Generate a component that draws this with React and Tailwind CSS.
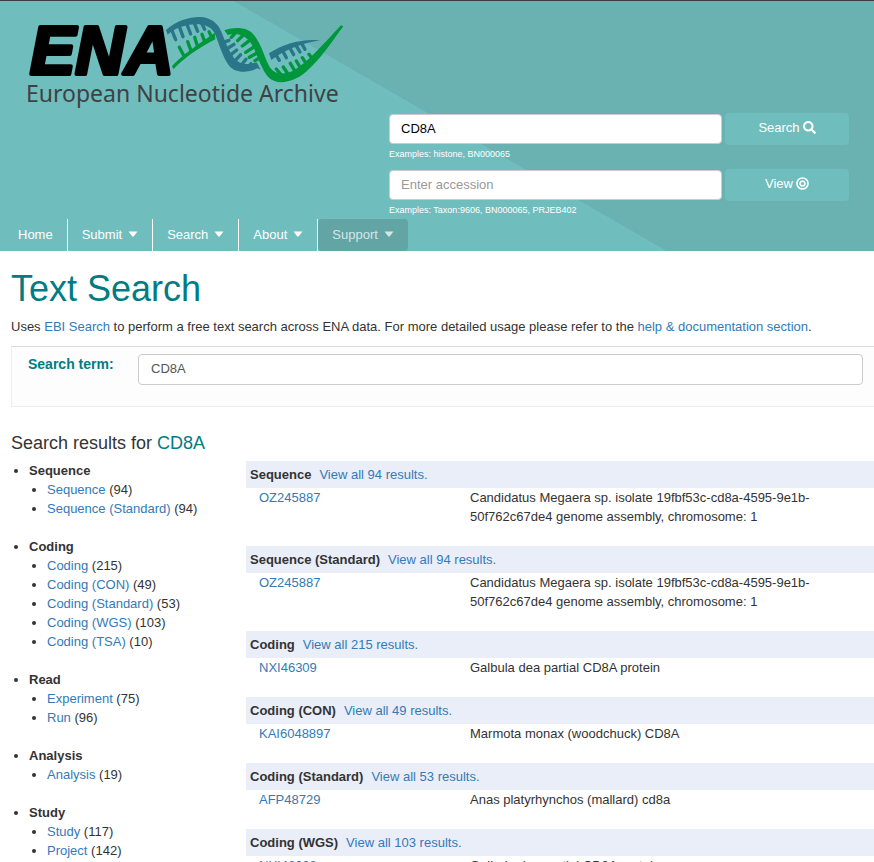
import React, { useState } from 'react';
import { FaSearch, FaBullseye } from 'react-icons/fa';

const navItems = [
  { label: 'Submit' },
  { label: 'Search' },
  { label: 'About' },
  { label: 'Support', active: true },
];

const groups = [
  {
    title: 'Sequence',
    items: [['Sequence', 94], ['Sequence (Standard)', 94]],
  },
  {
    title: 'Coding',
    items: [
      ['Coding', 215],
      ['Coding (CON)', 49],
      ['Coding (Standard)', 53],
      ['Coding (WGS)', 103],
      ['Coding (TSA)', 10],
    ],
  },
  { title: 'Read', items: [['Experiment', 75], ['Run', 96]] },
  { title: 'Analysis', items: [['Analysis', 19]] },
  { title: 'Study', items: [['Study', 117], ['Project', 142]] },
];

const megaera = 'Candidatus Megaera sp. isolate 19fbf53c-cd8a-4595-9e1b-50f762c67de4 genome assembly, chromosome: 1';

const results = [
  { title: 'Sequence', count: 94, id: 'OZ245887', text: megaera },
  { title: 'Sequence (Standard)', count: 94, id: 'OZ245887', text: megaera },
  { title: 'Coding', count: 215, id: 'NXI46309', text: 'Galbula dea partial CD8A protein' },
  { title: 'Coding (CON)', count: 49, id: 'KAI6048897', text: 'Marmota monax (woodchuck) CD8A' },
  { title: 'Coding (Standard)', count: 53, id: 'AFP48729', text: 'Anas platyrhynchos (mallard) cd8a' },
  { title: 'Coding (WGS)', count: 103, id: 'NXI46309', text: 'Galbula dea partial CD8A protein' },
];

function Logo() {
  return (
    <svg viewBox="26 14 324 94" className="block w-[324px] h-[94px] overflow-visible" role="img" aria-label="ENA European Nucleotide Archive">
      <text
        x="30"
        y="74"
        fontSize="68"
        fontWeight="700"
        fontStyle="italic"
        fontFamily="'Liberation Sans', Arial, sans-serif"
        stroke="#000"
        strokeWidth="4"
        strokeLinejoin="round"
      >
        ENA
      </text>
      <text x="26" y="102" fontSize="23" fill="#3e4243" fontFamily="'Noto Sans', sans-serif">
        European Nucleotide Archive
      </text>
      <g transform="translate(160 0) scale(0.3333)" strokeWidth="10" strokeLinecap="round" fill="none">
        <path
          fill="#2a7588"
          d="M18 90C50 62 85 51 120 51C152 52 172 68 184 95C196 125 206 152 222 174C240 196 268 195 290 187L302 209L292 205C262 220 224 220 206 195C188 170 178 133 166 104C155 80 135 73 108 73C75 74 45 84 23 104Z"
        />
        <path
          stroke="#2a7588"
          d="M36 92L47 119M59 82L69 110M82 76L92 102M104 72L113 94M126 72L134 88M190 127L207 121M200 147L222 133M210 166L230 150M222 186L242 164M242 198L258 178M265 202L273 191"
        />
        <path fill="#00973c" d="M36 198C68 162 118 132 164 98L166 118C115 144 75 172 40 208Z" />
        <path stroke="#00973c" d="M72 168L58 142M93 152L83 125M113 140L104 112M135 127L126 103M155 112L147 95" />
        <path
          fill="#00973c"
          d="M193 91C225 80 262 81 281 104C306 134 313 175 331 204C346 224 372 224 396 214C442 190 492 130 543 76L550 79C520 120 482 177 440 214C400 250 348 257 324 230C300 202 291 157 271 127C252 101 224 99 203 105Z"
        />
        <path
          stroke="#00973c"
          d="M228 97L214 112M250 105L233 122M268 122L247 138M280 142L257 157M290 160L268 172M299 174L285 182M364 225L349 207M384 222L370 201M404 212L391 190M421 203L409 183M438 190L427 173M457 176L447 163"
        />
        <path fill="#2a7588" d="M327 160C370 130 430 115 480 121C440 127 380 145 334 180Z" />
        <path stroke="#2a7588" d="M345 160L358 181M367 150L379 173M389 142L401 164M408 136L420 156M425 130L435 148" />
      </g>
    </svg>
  );
}

function Caret() {
  return (
    <svg viewBox="0 0 10 6" className="ml-1.5 w-2.5 h-1.5" aria-hidden="true">
      <path d="M0.5 0.5h9L5.8 5.3q-0.8 0.7 -1.6 0z" fill="currentColor" />
    </svg>
  );
}

function HeaderSearch({ label, button, Icon, example, value, onChange, placeholder }) {
  return (
    <form className="pb-2" onSubmit={(e) => e.preventDefault()}>
      <div className="flex gap-[3px]">
        <input
          type="text"
          aria-label={label}
          placeholder={placeholder}
          value={value}
          onChange={(e) => onChange(e.target.value)}
          className="flex-1 min-w-0 h-[30px] mt-px px-[11px] pb-0.5 bg-white border border-[#ccc] rounded-sm text-black placeholder:text-[#999]"
        />
        <button type="submit" className="w-[124px] h-8 pb-1 flex items-center justify-center gap-[3px] rounded-sm bg-[#70bdbd] text-white">
          {button} <Icon className="text-[13px]" />
        </button>
      </div>
      <p className="mt-[3px] text-[9px] leading-[13px] text-white">Examples: {example}</p>
    </form>
  );
}

function Header({ term, setTerm }) {
  const [accession, setAccession] = useState('');

  return (
    <header className="border-t border-[#3a3f40] bg-[linear-gradient(30deg,#70bdbd_51%,#6ab2b2_51%)]">
      <div className="pt-[13px] pl-[26px]">
        <Logo />
      </div>
      <div className="mt-[5px] ml-[389px] mr-[25px]">
        <HeaderSearch
          label="Search text"
          button="Search"
          Icon={FaSearch}
          example="histone, BN000065"
          value={term}
          onChange={setTerm}
        />
        <HeaderSearch
          label="Accession"
          button="View"
          Icon={FaBullseye}
          example="Taxon:9606, BN000065, PRJEB402"
          value={accession}
          onChange={setAccession}
          placeholder="Enter accession"
        />
      </div>
      <nav className="-mt-1.5 pl-1 flex h-8 text-white">
        <a href="#" className="flex items-center px-3.5 pb-0.5">Home</a>
        {navItems.map((item) => (
          <div key={item.label} className="flex border-l border-white">
            <button
              type="button"
              className={`flex items-center px-3.5 pb-0.5 ${item.active ? 'rounded-sm bg-[#63a5a5] text-[#d5e5e5]' : ''}`}
            >
              {item.label}
              <Caret />
            </button>
          </div>
        ))}
      </nav>
    </header>
  );
}

function Sidebar() {
  return (
    <ul className="w-[235px] shrink-0 pl-[18px] list-disc">
      {groups.map((group) => (
        <li key={group.title} className="mb-[19px]">
          <b>{group.title}</b>
          <ul className="pl-[18px] list-disc">
            {group.items.map(([name, count]) => (
              <li key={name}>
                <a href="#" className="text-[#337ab7]">{name}</a> ({count})
              </li>
            ))}
          </ul>
        </li>
      ))}
    </ul>
  );
}

function Results() {
  return (
    <div className="flex-1 min-w-0">
      {results.map((r) => (
        <section key={r.title} className="mb-5">
          <div className="h-[27px] px-1 pt-1 bg-[#e9eef9]">
            <b>{r.title}</b>
            <a href="#" className="ml-2 text-[#337ab7]">View all {r.count} results.</a>
          </div>
          <div className="flex pl-[13px]">
            <a href="#" className="w-[211px] shrink-0 text-[#337ab7]">{r.id}</a>
            <p className="max-w-[360px]">{r.text}</p>
          </div>
        </section>
      ))}
    </div>
  );
}

function App() {
  const [term, setTerm] = useState('CD8A');

  return (
    <div className="h-screen overflow-hidden bg-white font-['Liberation_Sans',Arial,sans-serif] text-[13px] leading-[19px] text-[#333]">
      <Header term={term} setTerm={setTerm} />
      <main className="pl-[11px]">
        <h1 className="pt-[18px] text-[36px] leading-10 text-[#007c82]">Text Search</h1>
        <p className="mt-2">
          Uses <a href="#" className="text-[#337ab7]">EBI Search</a> to perform a free text search across ENA data. For more
          detailed usage please refer to the <a href="#" className="text-[#337ab7]">help &amp; documentation section</a>.
        </p>

        <div className="mt-2.5 h-[61px] flex border border-r-0 border-[#eee] border-t-[#ddd] bg-[#fdfdfd] pt-[7px] pl-4 pr-[11px]">
          <label htmlFor="term" className="w-[110px] text-sm font-bold text-[#007c82]">Search term:</label>
          <input
            id="term"
            type="text"
            value={term}
            onChange={(e) => setTerm(e.target.value)}
            className="flex-1 min-w-0 h-[31px] px-3 pb-0.5 bg-white border border-[#ccc] rounded-sm text-[#555]"
          />
        </div>

        <h2 className="mt-[25px] text-[18px] leading-[22px]">
          Search results for <span className="text-[#007c82]">CD8A</span>
        </h2>
        <div className="mt-[7px] flex">
          <Sidebar />
          <Results />
        </div>
      </main>
    </div>
  );
}

export default App;
